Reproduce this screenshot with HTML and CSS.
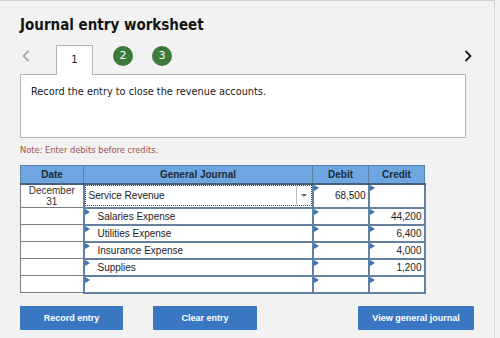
FILE: index.html
```html
<!DOCTYPE html>
<html lang="en">

<head>
    <meta charset="utf-8">
    <meta name="viewport" content="width=device-width, initial-scale=1.0">
    <title>Journal entry worksheet</title>
    <link rel="stylesheet" href="styles.css">
</head>

<body>
    <div class="sheet">
        <h1>Journal entry worksheet</h1>

        <nav class="steps">
            <span class="arrow prev">
                <svg width="8" height="12" viewBox="0 0 8 12"><polyline points="6.5,1 1.5,6 6.5,11" fill="none" stroke="currentColor" stroke-width="1.8"/></svg>
            </span>
            <span class="tab current">1</span>
            <span class="dot">2</span>
            <span class="dot">3</span>
            <span class="arrow next">
                <svg width="8" height="12" viewBox="0 0 8 12"><polyline points="1.5,1 6.5,6 1.5,11" fill="none" stroke="currentColor" stroke-width="1.8"/></svg>
            </span>
        </nav>

        <div class="prompt">
            <p>Record the entry to close the revenue accounts.</p>
        </div>

        <p class="note">Note: Enter debits before credits.</p>

        <table class="journal">
            <thead>
                <tr>
                    <th class="c-date">Date</th>
                    <th class="c-acct">General Journal</th>
                    <th class="c-num">Debit</th>
                    <th class="c-num">Credit</th>
                </tr>
            </thead>
            <tbody>
                <tr class="first">
                    <td class="date">December<br>31</td>
                    <td class="inp acct focus">
                        <div class="select">
                            <span>Service Revenue</span>
                            <span class="drop"></span>
                        </div>
                    </td>
                    <td class="inp num mark">68,500</td>
                    <td class="inp num mark"></td>
                </tr>
                <tr>
                    <td class="date"></td>
                    <td class="inp acct mark indent">Salaries Expense</td>
                    <td class="inp num mark"></td>
                    <td class="inp num mark">44,200</td>
                </tr>
                <tr>
                    <td class="date"></td>
                    <td class="inp acct mark indent">Utilities Expense</td>
                    <td class="inp num mark"></td>
                    <td class="inp num mark">6,400</td>
                </tr>
                <tr>
                    <td class="date"></td>
                    <td class="inp acct mark indent">Insurance Expense</td>
                    <td class="inp num mark"></td>
                    <td class="inp num mark">4,000</td>
                </tr>
                <tr>
                    <td class="date"></td>
                    <td class="inp acct mark indent">Supplies</td>
                    <td class="inp num mark"></td>
                    <td class="inp num mark">1,200</td>
                </tr>
                <tr>
                    <td class="date"></td>
                    <td class="inp acct mark indent"></td>
                    <td class="inp num mark"></td>
                    <td class="inp num mark"></td>
                </tr>
            </tbody>
        </table>

        <div class="actions">
            <button class="btn record">Record entry</button>
            <button class="btn clear">Clear entry</button>
            <button class="btn view">View general journal</button>
        </div>
    </div>
</body>

</html>
```

FILE: styles.css
```css
body {
    margin: 0;
    background-color: #f2f2f2;
    font-family: "DejaVu Sans", Verdana, sans-serif;
    color: #1a1a1a;
}

.sheet {
    width: 474px;
    height: 337px;
    padding-left: 20px;
    border-top: 1px solid #cfcfcf;
    border-right: 1px solid #d8d8d8;
    overflow: hidden;
}

h1 {
    margin: 14px 0 0 0;
    font-family: "DejaVu Sans Condensed", "DejaVu Sans", sans-serif;
    font-size: 15px;
    line-height: 20px;
    font-weight: bold;
    color: #141414;
}

/* steps */

.steps {
    display: flex;
    align-items: flex-end;
    height: 31px;
    margin-top: 8px;
    width: 452px;
}

.steps .arrow {
    display: block;
    height: 12px;
    margin-bottom: 12px;
}

.arrow svg {
    display: block;
}

.prev {
    color: #a8a8a8;
    margin-left: 2px;
    margin-right: 26px;
}

.next {
    color: #1a1a1a;
    margin-left: auto;
}

.tab {
    width: 37px;
    height: 30px;
    box-sizing: border-box;
    background-color: #fff;
    border: 1px solid #b4b4b4;
    border-bottom: none;
    text-align: center;
    font-size: 10px;
    line-height: 27px;
    margin-bottom: -1px;
    position: relative;
    z-index: 1;
}

.dot {
    width: 20px;
    height: 20px;
    border-radius: 50%;
    background-color: #3c7a3c;
    color: #fff;
    font-size: 11px;
    line-height: 20px;
    text-align: center;
    margin-bottom: 8px;
    margin-left: 19px;
}

.tab + .dot {
    margin-left: 20px;
}

/* prompt */

.prompt {
    width: 446px;
    height: 64px;
    box-sizing: border-box;
    background-color: #fff;
    border: 1px solid #b4b4b4;
    padding: 10px 10px;
}

.prompt p {
    margin: 0;
    font-size: 9.75px;
    line-height: 14px;
    color: #1a1a1a;
}

.note {
    margin: 5px 0 0 0;
    font-size: 8.3px;
    line-height: 14px;
    color: #a4504e;
}

/* journal table */

.journal {
    margin-top: 8px;
    border-collapse: collapse;
    table-layout: fixed;
    width: 405px;
    font-family: "Liberation Sans", Arial, sans-serif;
    font-size: 10px;
    color: #222;
}

.journal th {
    background-color: #6ea6e2;
    height: 17px;
    padding: 0;
    font-weight: bold;
    font-size: 10px;
    color: #1e2a38;
    border: 1px solid #5b7fa6;
    border-bottom: 2px solid #46607e;
}

.c-date {
    width: 62px;
}

.c-acct {
    width: 228px;
}

.c-num {
    width: 55px;
}

.journal td {
    height: 15px;
    padding: 0;
    background-color: #fff;
    position: relative;
}

.journal tr.first td {
    height: 20px;
}

.journal td.date {
    text-align: center;
    border: 1px solid #7e7e7e;
    line-height: 11px;
    color: #333;
    vertical-align: top;
    padding-top: 0;
}

.journal td.inp {
    border: 2px solid #62809f;
    border-top-width: 1px;
}

.acct {
    padding-left: 3px;
    text-align: left;
}

.acct.indent {
    padding-left: 13px;
}

.num {
    text-align: right;
    padding-right: 2px;
}

.journal td.num {
    padding-right: 2px;
}

/* small blue marker in the corner of each input */
.mark::before {
    content: "";
    position: absolute;
    left: 0;
    top: 0;
    border-top: 3px solid transparent;
    border-bottom: 3px solid transparent;
    border-left: 5px solid #3b72b4;
}

.journal td.focus {
    padding: 0;
}

.select {
    display: flex;
    align-items: center;
    height: 19px;
    border: 1px dotted #444;
    padding-left: 3px;
}

.select span:first-child {
    flex: 1;
}

.drop {
    width: 14px;
    height: 19px;
    border-left: 1px solid #bdbdbd;
    position: relative;
}

.drop::after {
    content: "";
    position: absolute;
    left: 4px;
    top: 8px;
    border-left: 3px solid transparent;
    border-right: 3px solid transparent;
    border-top: 3px solid #666;
}

/* buttons */

.actions {
    display: flex;
    margin-top: 12px;
    width: 454px;
}

.btn {
    height: 24px;
    border: none;
    border-radius: 1px;
    background-color: #3a77c2;
    color: #fff;
    font-family: "Liberation Sans", Arial, sans-serif;
    font-weight: bold;
    font-size: 9px;
    padding: 0;
}

.btn:hover {
    cursor: pointer;
}

.record {
    width: 103px;
}

.clear {
    width: 104px;
    margin-left: 30px;
}

.view {
    width: 116px;
    margin-left: auto;
}
```
